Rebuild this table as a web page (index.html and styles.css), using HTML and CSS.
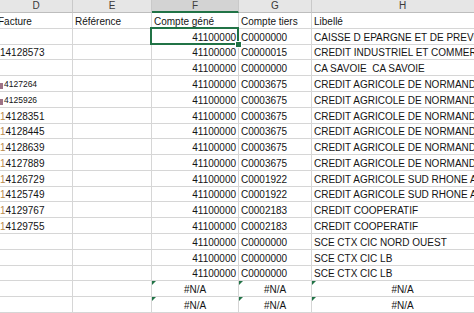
FILE: index.html
```html
<!DOCTYPE html>
<html lang="fr">
<head>
<meta charset="utf-8">
<title>Feuille</title>
<link rel="stylesheet" href="styles.css">
</head>
<body>
<div class="sheet">
  <div class="hd">D</div><div class="hd">E</div><div class="hd hd-sel">F</div><div class="hd">G</div><div class="hd">H</div>

  <div class="c d shift">Facture</div><div class="c">Référence</div><div class="c">Compte géné</div><div class="c">Compte tiers</div><div class="c">Libellé</div>

  <div class="c d"></div><div class="c"></div><div class="c num sel">41100000</div><div class="c">C0000000</div><div class="c">CAISSE D EPARGNE ET DE PREVOYANCE</div>
  <div class="c d">14128573</div><div class="c"></div><div class="c num">41100000</div><div class="c">C0000015</div><div class="c">CREDIT INDUSTRIEL ET COMMERCIAL</div>
  <div class="c d"></div><div class="c"></div><div class="c num">41100000</div><div class="c">C0000000</div><div class="c">CA SAVOIE  CA SAVOIE</div>
  <div class="c d small"><span class="mk mk-mauve"></span>4127264</div><div class="c"></div><div class="c num">41100000</div><div class="c">C0003675</div><div class="c">CREDIT AGRICOLE DE NORMANDIE</div>
  <div class="c d small"><span class="mk mk-mauve"></span>4125926</div><div class="c"></div><div class="c num">41100000</div><div class="c">C0003675</div><div class="c">CREDIT AGRICOLE DE NORMANDIE</div>
  <div class="c d"><span class="tan">1</span>4128351</div><div class="c"></div><div class="c num">41100000</div><div class="c">C0003675</div><div class="c">CREDIT AGRICOLE DE NORMANDIE</div>
  <div class="c d"><span class="tan">1</span>4128445</div><div class="c"></div><div class="c num">41100000</div><div class="c">C0003675</div><div class="c">CREDIT AGRICOLE DE NORMANDIE</div>
  <div class="c d"><span class="tan">1</span>4128639</div><div class="c"></div><div class="c num">41100000</div><div class="c">C0003675</div><div class="c">CREDIT AGRICOLE DE NORMANDIE</div>
  <div class="c d"><span class="tan">1</span>4127889</div><div class="c"></div><div class="c num">41100000</div><div class="c">C0003675</div><div class="c">CREDIT AGRICOLE DE NORMANDIE</div>
  <div class="c d"><span class="tan">1</span>4126729</div><div class="c"></div><div class="c num">41100000</div><div class="c">C0001922</div><div class="c">CREDIT AGRICOLE SUD RHONE ALPES</div>
  <div class="c d"><span class="tan">1</span>4125749</div><div class="c"></div><div class="c num">41100000</div><div class="c">C0001922</div><div class="c">CREDIT AGRICOLE SUD RHONE ALPES</div>
  <div class="c d"><span class="tan">1</span>4129767</div><div class="c"></div><div class="c num">41100000</div><div class="c">C0002183</div><div class="c">CREDIT COOPERATIF</div>
  <div class="c d"><span class="tan">1</span>4129755</div><div class="c"></div><div class="c num">41100000</div><div class="c">C0002183</div><div class="c">CREDIT COOPERATIF</div>
  <div class="c d"></div><div class="c"></div><div class="c num">41100000</div><div class="c">C0000000</div><div class="c">SCE CTX CIC NORD OUEST</div>
  <div class="c d"></div><div class="c"></div><div class="c num">41100000</div><div class="c">C0000000</div><div class="c">SCE CTX CIC LB</div>
  <div class="c d"></div><div class="c"></div><div class="c num">41100000</div><div class="c">C0000000</div><div class="c">SCE CTX CIC LB</div>
  <div class="c d"></div><div class="c"></div><div class="c ctr err">#N/A</div><div class="c ctr err">#N/A</div><div class="c ctr err">#N/A</div>
  <div class="c d"></div><div class="c"></div><div class="c ctr err">#N/A</div><div class="c ctr err">#N/A</div><div class="c ctr err">#N/A</div>
</div>
</body>
</html>
```

FILE: styles.css
```css
html, body {
  margin: 0;
  padding: 0;
  background: #ffffff;
  overflow: hidden;
}

body {
  width: 474px;
  height: 313px;
}

.sheet {
  display: grid;
  grid-template-columns: 73px 79px 87px 73px 182px;
  grid-template-rows: 13px repeat(19, 1fr);
  width: 494px;
  height: 313px;
  font-family: "Liberation Sans", Arial, sans-serif;
  font-size: 10px;
  color: #141414;
}

.hd {
  background: #e6e6e6;
  border-right: 1px solid #c9c9c9;
  border-bottom: 1px solid #bdbdbd;
  color: #3a3a3a;
  text-align: center;
  line-height: 12px;
  font-size: 10px;
}

.hd-sel {
  background: #d3d3d3;
  border-bottom: 2px solid #217346;
  line-height: 11px;
  color: #3c3c3c;
}

.c {
  position: relative;
  border-right: 1px solid #d6d6d6;
  border-bottom: 1px solid #d6d6d6;
  padding: 0 2px;
  white-space: pre;
  overflow: hidden;
  display: flex;
  align-items: flex-end;
  line-height: 13px;
}

.d {
  padding-left: 0;
}

.shift {
  text-indent: -2px;
}

.small {
  font-size: 8.5px;
}

.num {
  justify-content: flex-end;
}

.ctr {
  justify-content: center;
}

.sel {
  overflow: visible;
  z-index: 2;
}

.sel::before {
  content: "";
  position: absolute;
  left: -2px;
  top: -2px;
  right: -1px;
  bottom: -1px;
  border: 2px solid #217346;
}

.sel::after {
  content: "";
  position: absolute;
  right: -4px;
  bottom: -4px;
  width: 5px;
  height: 5px;
  background: #217346;
  border: 1px solid #ffffff;
}

.err::before {
  content: "";
  position: absolute;
  left: 0;
  top: 0;
  width: 0;
  height: 0;
  border-top: 4px solid #217346;
  border-right: 4px solid transparent;
}

.mk {
  display: inline-block;
  width: 3px;
  height: 6px;
  margin-right: 1px;
  margin-bottom: 2px;
}

.mk-mauve {
  background: #9d7286;
}

.tan {
  color: #b98a4e;
}
```
